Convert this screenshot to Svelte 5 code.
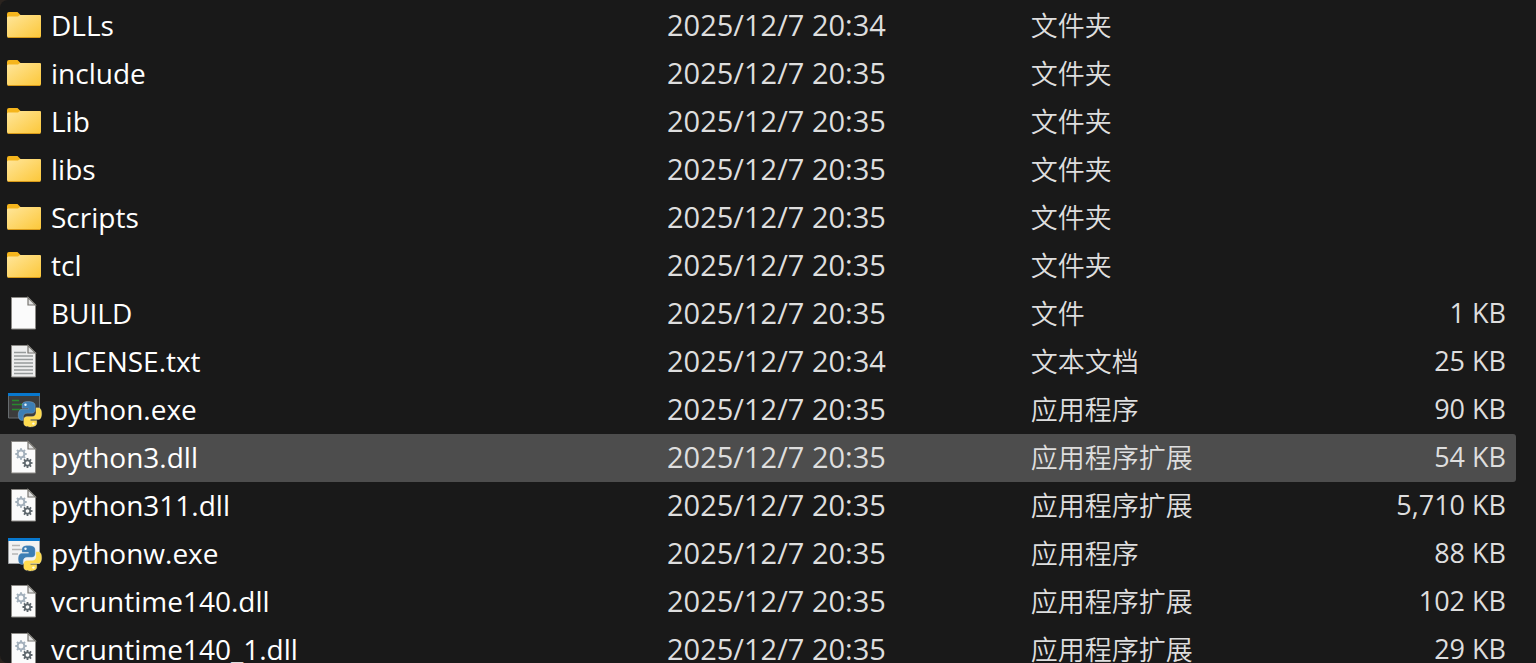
<script>
  const d34 = '2025/12/7 20:34';
  const d35 = '2025/12/7 20:35';
  const files = [
    { name: 'DLLs', icon: 'folder', date: d34, type: '文件夹', size: '' },
    { name: 'include', icon: 'folder', date: d35, type: '文件夹', size: '' },
    { name: 'Lib', icon: 'folder', date: d35, type: '文件夹', size: '' },
    { name: 'libs', icon: 'folder', date: d35, type: '文件夹', size: '' },
    { name: 'Scripts', icon: 'folder', date: d35, type: '文件夹', size: '' },
    { name: 'tcl', icon: 'folder', date: d35, type: '文件夹', size: '' },
    { name: 'BUILD', icon: 'file', date: d35, type: '文件', size: '1 KB' },
    { name: 'LICENSE.txt', icon: 'text', date: d34, type: '文本文档', size: '25 KB' },
    { name: 'python.exe', icon: 'console', date: d35, type: '应用程序', size: '90 KB' },
    { name: 'python3.dll', icon: 'dll', date: d35, type: '应用程序扩展', size: '54 KB', selected: true },
    { name: 'python311.dll', icon: 'dll', date: d35, type: '应用程序扩展', size: '5,710 KB' },
    { name: 'pythonw.exe', icon: 'window', date: d35, type: '应用程序', size: '88 KB' },
    { name: 'vcruntime140.dll', icon: 'dll', date: d35, type: '应用程序扩展', size: '102 KB' },
    { name: 'vcruntime140_1.dll', icon: 'dll', date: d35, type: '应用程序扩展', size: '29 KB' }
  ];
</script>

{#snippet gear(cx, cy, r, color, width)}
  <g transform="translate({cx} {cy})" stroke={color} fill="none">
    <circle r={r} stroke-width={width} />
    {#each [0, 45, 90, 135, 180, 225, 270, 315] as a}
      <path d="M0 {-r}V{-r - 2.3}" stroke-width={width} transform="rotate({a})" />
    {/each}
  </g>
{/snippet}

{#snippet python()}
  <g stroke="#e8eef2" stroke-opacity=".35" stroke-width=".6">
    <path fill="#3d7eb5" d="M28 15.500c-4.300 0-6 1.300-6 4v2.800h6.500v1H22c-2.700 0-3.800 2.700-3.800 5.700s1.300 5.500 3.600 5.500h1.400v-3.300c0-2.300 1.700-3.900 3.900-3.900H32c1.900 0 3.200-1.500 3.200-3.300v-4.500c0-2.700-2.700-4-7.200-4Z" />
    <path fill="#ffdc4f" d="M36 21.800v4.700c0 2.300-1.700 4.100-3.900 4.100H27c-1.900 0-3.300 1.500-3.300 3.300v3.200c0 2.600 2.500 3.900 6.500 3.900s6.600-1.300 6.600-3.900v-2.500h-6.300v-1h7.700c2.400 0 3.500-2.500 3.500-5.900 0-3.500-1.100-5.900-3.500-5.900Z" />
  </g>
  <circle cx="25.500" cy="18.800" r="1.200" fill="#edf5fb" />
  <circle cx="33.400" cy="37.600" r="1.200" fill="#fffbe5" />
{/snippet}

<main>
  <table aria-label="文件">
    <colgroup><col class="c-name" /><col class="c-date" /><col class="c-type" /><col /></colgroup>
    <tbody>
      {#each files as f}
        <tr class:selected={f.selected}>
          <td class="name">
            <div class="entry">
              <svg viewBox="0 0 48 48" width="48" height="48" aria-hidden="true">
                {#if f.icon === 'folder'}
                  <path d="M7 12a2 2 0 0 1 2-2h8.500l3 3H40v10H7Z" fill="#f5b51c" />
                  <path d="M8 14.500h10l2-1.500h20a1 1 0 0 1 1 1v20a2 2 0 0 1-2 2H9a2 2 0 0 1-2-2V15.500Z" fill="url(#folder-front)" />
                  <path d="M8 35.500h32" stroke="#d99a19" />
                {:else if f.icon === 'console' || f.icon === 'window'}
                  {#if f.icon === 'console'}
                    <path d="M8.500 8.500h31v23.500h-31Z" fill="#3c3c3c" stroke="#666b6e" />
                    <path d="M8 7h32v3H8Z" fill="#0878ce" />
                    <path d="M12 14.500h7M12 18.500h12M12 23.500h9" stroke="#27882d" stroke-width="1.500" />
                  {:else}
                    <path d="M8.500 8.500h31v25h-31Z" fill="#f2f2f2" stroke="#9b9fa2" />
                    <path d="M8 8h32v3H8Z" fill="#0878ce" />
                    <path d="M12 15.500h8M12 19.500h11M12 24h6" stroke="#b5b5b5" stroke-width="1.500" />
                  {/if}
                  {@render python()}
                {:else}
                  <path d="M11.500 7.500h17l7 7v24.500h-24Z" fill={f.icon === 'text' ? '#eeeeee' : '#fbfbfb'} stroke="#8b8985" />
                  <path d="M28 7.500v7.500h7.500Z" fill="#e2e2e2" stroke="#777570" stroke-width="1.200" />
                  {#if f.icon === 'text'}
                    <path d="M14 14.500h12M14 18h19M14 21.500h19M14 25h19M14 28.500h19M14 32h19M14 35.500h19" stroke="#979b9b" stroke-width="1.300" />
                  {:else if f.icon === 'dll'}
                    {@render gear(21, 20, 3.4, '#a3b0bb', 2)}
                    {@render gear(27.5, 29, 2.7, '#5e676d', 1.8)}
                  {/if}
                {/if}
              </svg>
              <span>{f.name}</span>
            </div>
          </td>
          <td class="date">{f.date}</td>
          <td class="type">{f.type}</td>
          <td class="size">{f.size}</td>
        </tr>
      {/each}
    </tbody>
  </table>
  <svg class="defs" width="0" height="0" aria-hidden="true">
    <defs>
      <linearGradient id="folder-front" x1="0" y1="0" x2="1" y2="1">
        <stop offset="0" stop-color="#ffe69b" />
        <stop offset="1" stop-color="#fcc738" />
      </linearGradient>
    </defs>
  </svg>
</main>

<style>
  :global(body) {
    margin: 0;
    background: #2b241f;
  }
  main {
    box-sizing: border-box;
    height: 100vh;
    overflow: hidden;
    padding: 2px 20px 0 0;
    background: #191919;
    border-radius: 8px 0 0 8px;
    color: #dedede;
    font-family: "Open Sans", "Noto Sans CJK SC", sans-serif;
    font-size: 28px;
    line-height: 46px;
  }
  .defs {
    display: block;
  }
  table {
    width: 100%;
    table-layout: fixed;
    border-collapse: separate;
    border-spacing: 0;
  }
  .c-name {
    width: 44%;
  }
  .c-date {
    width: 24%;
  }
  .c-type {
    width: 18%;
  }
  td {
    height: 48px;
    padding: 0;
    vertical-align: top;
    white-space: nowrap;
  }
  .entry {
    display: flex;
    gap: 3px;
    height: 48px;
    color: #fff;
  }
  .entry svg {
    flex: none;
  }
  .date {
    font-size: 29px;
  }
  .type {
    font-family: "Noto Sans CJK SC", sans-serif;
    font-size: 27px;
    font-weight: 350;
  }
  .size {
    padding-right: 10px;
    font-size: 27px;
    text-align: right;
  }
  .selected td {
    background: #4d4d4d;
  }
  .selected td:last-child {
    border-radius: 0 3px 3px 0;
  }
</style>
